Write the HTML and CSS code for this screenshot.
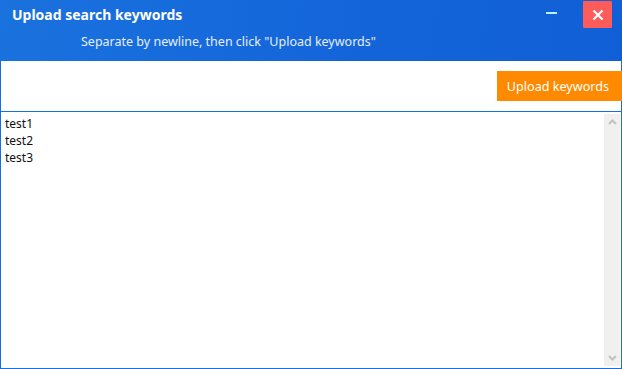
FILE: index.html
```html
<!DOCTYPE html>
<html lang="en">
<head>
  <meta charset="UTF-8">
  <title>Upload search keywords</title>
  <link rel="stylesheet" href="styles.css">
</head>
<body>
  <div class="dialog">
    <div class="header">
      <div class="title">Upload search keywords</div>
      <div class="hint">Separate by newline, then click "Upload keywords"</div>
      <span class="minimize"></span>
      <button class="close" title="Close">
        <svg width="12" height="12" viewBox="0 0 12 12"><path d="M1.5 1.5 L10.5 10.5 M10.5 1.5 L1.5 10.5" stroke="#fff" stroke-width="2.2"/></svg>
      </button>
    </div>
    <div class="body">
      <div class="toolbar">
        <button class="upload">Upload keywords</button>
      </div>
      <div class="editor">
        <div class="lines">test1<br>test2<br>test3</div>
        <div class="scrollbar">
          <svg width="9" height="6" viewBox="0 0 9 6"><path d="M1 5 L4.5 1.5 L8 5" fill="none" stroke="#c2c2c2" stroke-width="2"/></svg>
          <svg width="9" height="6" viewBox="0 0 9 6"><path d="M1 1 L4.5 4.5 L8 1" fill="none" stroke="#c2c2c2" stroke-width="2"/></svg>
        </div>
      </div>
    </div>
  </div>
</body>
</html>
```

FILE: styles.css
```css
html, body {
  margin: 0;
  padding: 0;
}
body {
  font-family: "Noto Sans", "Open Sans", sans-serif;
  background: #fff;
}
.dialog {
  width: 622px;
  height: 369px;
  display: flex;
  flex-direction: column;
  box-sizing: border-box;
}
.header {
  position: relative;
  height: 61px;
  flex: none;
  background: linear-gradient(100deg, #1a72de 0%, #1364d9 60%, #115fd6 100%);
  color: #fff;
}
.title {
  font-size: 14px;
  font-weight: bold;
  padding: 4px 0 0 12px;
  line-height: 22px;
}
.hint {
  font-size: 12.5px;
  color: #e6eefc;
  padding: 7px 0 0 81px;
  line-height: 18px;
}
.minimize {
  position: absolute;
  left: 546px;
  top: 12px;
  width: 11px;
  height: 2px;
  background: #b4f0ff;
}
.close {
  position: absolute;
  left: 583px;
  top: 1px;
  width: 29px;
  height: 27px;
  border: none;
  padding: 0;
  background: #fd5c5a;
  border-radius: 1px;
  display: flex;
  align-items: center;
  justify-content: center;
}
.body {
  flex: 1;
  display: flex;
  flex-direction: column;
  border: 1px solid #1470e0;
  border-top: none;
  min-height: 0;
}
.toolbar {
  display: flex;
  justify-content: flex-end;
  padding: 10px 0;
  flex: none;
}
.upload {
  background: #ff8a00;
  color: #fff;
  border: none;
  height: 30px;
  padding: 0 13px 0 10px;
  font-family: "Noto Sans", sans-serif;
  font-size: 12.6px;
  margin-right: -1px;
}
.editor {
  flex: 1;
  display: flex;
  border-top: 1px solid #1470e0;
  min-height: 0;
}
.lines {
  flex: 1;
  font-size: 12px;
  line-height: 17px;
  color: #111;
  padding: 3px 4px;
}
.scrollbar {
  width: 16px;
  margin: 2px 1px 2px 0;
  background: #f0f0f0;
  display: flex;
  flex-direction: column;
  justify-content: space-between;
  align-items: center;
  padding: 5px 0;
  box-sizing: border-box;
}
```
